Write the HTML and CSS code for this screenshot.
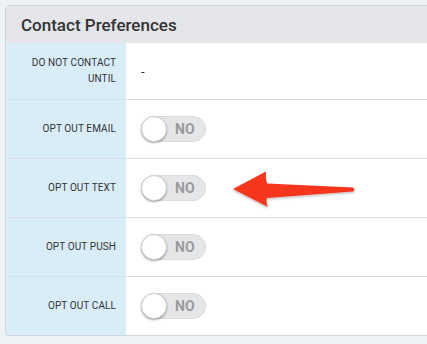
FILE: index.html
```html
<!DOCTYPE html>
<html lang="en">

<head>
    <meta charset="UTF-8">
    <meta name="viewport" content="width=device-width, initial-scale=1.0">
    <title>Contact Preferences</title>
    <link rel="stylesheet" href="styles.css">
</head>

<body>
    <div class="panel">
        <div class="panel-header">
            <h2>Contact Preferences</h2>
        </div>

        <div class="pref-row first">
            <div class="pref-label">DO NOT CONTACT UNTIL</div>
            <div class="pref-value">-</div>
        </div>

        <div class="pref-row">
            <div class="pref-label">OPT OUT EMAIL</div>
            <div class="pref-value">
                <span class="toggle"><span class="knob"></span><span class="toggle-text">NO</span></span>
            </div>
        </div>

        <div class="pref-row">
            <div class="pref-label">OPT OUT TEXT</div>
            <div class="pref-value">
                <span class="toggle"><span class="knob"></span><span class="toggle-text">NO</span></span>
            </div>
        </div>

        <div class="pref-row">
            <div class="pref-label">OPT OUT PUSH</div>
            <div class="pref-value">
                <span class="toggle"><span class="knob"></span><span class="toggle-text">NO</span></span>
            </div>
        </div>

        <div class="pref-row">
            <div class="pref-label">OPT OUT CALL</div>
            <div class="pref-value">
                <span class="toggle"><span class="knob"></span><span class="toggle-text">NO</span></span>
            </div>
        </div>
    </div>

    <!-- annotation arrow -->
    <svg class="arrow" width="427" height="344" viewBox="0 0 427 344">
        <defs>
            <filter id="shadow" x="-10%" y="-20%" width="120%" height="150%">
                <feDropShadow dx="0" dy="1.5" stdDeviation="1.2" flood-color="#000" flood-opacity="0.25" />
            </filter>
        </defs>
        <path filter="url(#shadow)" fill="#f5361c"
            d="M233 189 L266 171.5 Q265 178 267 183.5 L353 187.4 Q355.5 189.5 353 191.6 L267 198 Q265.5 202 268 207 Z" />
    </svg>
</body>

</html>
```

FILE: styles.css
```css
body {
    margin: 0;
    background-color: #eef2f7;
    font-family: Roboto, "Liberation Sans", Arial, sans-serif;
    overflow: hidden;
    height: 344px;
}

.panel {
    margin: 5px -20px 0 5px;
    border: 1px solid #d3d6da;
    border-radius: 3px;
    background-color: white;
    overflow: hidden;
}

.panel-header {
    height: 37px;
    background-color: #e4e6e9;
    display: flex;
    align-items: center;
    padding-left: 15px;
}

.panel-header h2 {
    margin: 0;
    font-size: 17px;
    font-weight: 500;
    color: #333;
}

.pref-row {
    display: flex;
    height: 58px;
    border-top: 1px solid #dcdfe2;
}

.pref-row.first {
    height: 56px;
    border-top: none;
}

.pref-label {
    width: 110px;
    padding-right: 10px;
    background-color: #d9edf9;
    display: flex;
    align-items: center;
    justify-content: flex-end;
    text-align: right;
    font-size: 10px;
    line-height: 16px;
    color: #333;
    letter-spacing: 0.1px;
}

.pref-row.first .pref-label {
    padding-left: 16px;
    width: 94px;
}

.pref-value {
    flex: 1;
    display: flex;
    align-items: center;
    padding-left: 15px;
    font-size: 13px;
    color: #333;
}

.toggle {
    position: relative;
    display: inline-flex;
    align-items: center;
    width: 65px;
    height: 26px;
    border-radius: 13px;
    background-color: #e5e6e8;
    box-sizing: border-box;
    border: 1px solid #d9dadc;
}

.knob {
    width: 26px;
    height: 26px;
    margin-left: -1px;
    border-radius: 50%;
    background-color: white;
    box-shadow: 0 1px 2px rgba(0, 0, 0, 0.35);
    box-sizing: border-box;
    border: 1px solid #cfd0d2;
}

.toggle-text {
    margin-left: 8px;
    font-size: 14px;
    font-weight: bold;
    color: #9a9a9a;
}

.arrow {
    position: absolute;
    left: 0;
    top: 0;
    pointer-events: none;
}
```
